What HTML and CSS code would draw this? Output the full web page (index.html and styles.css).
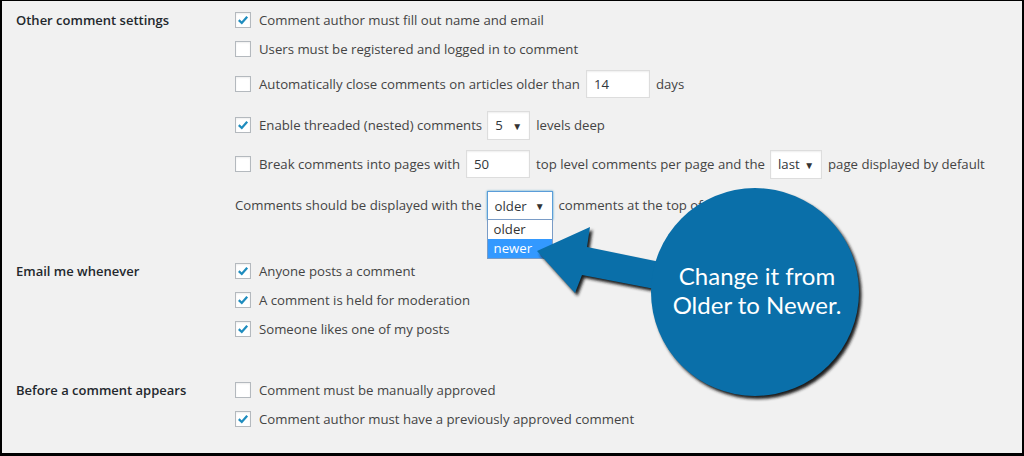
FILE: index.html
```html
<!DOCTYPE html>
<html>
<head>
<meta charset="utf-8">
<link rel="stylesheet" href="styles.css">
</head>
<body>
<div class="frame">
  <div class="screen">
    <div class="section s1">
      <div class="label">Other comment settings</div>
      <div class="fields">
        <div class="row">
          <span class="cb"><svg viewBox="0 0 16 16"><path d="M3.2 8.2 L6.6 11.4 L12.8 4.2"/></svg></span>
          <span>Comment author must fill out name and email</span>
        </div>
        <div class="row r2">
          <span class="cb"></span>
          <span>Users must be registered and logged in to comment</span>
        </div>
        <div class="row r3">
          <span class="cb"></span>
          <span>Automatically close comments on articles older than</span>
          <span class="input w64">14</span>
          <span>days</span>
        </div>
        <div class="row r4">
          <span class="cb"><svg viewBox="0 0 16 16"><path d="M3.2 8.2 L6.6 11.4 L12.8 4.2"/></svg></span>
          <span>Enable threaded (nested) comments</span>
          <span class="select w43">5<i class="caret">▼</i></span>
          <span>levels deep</span>
        </div>
        <div class="row r5">
          <span class="cb"></span>
          <span>Break comments into pages with</span>
          <span class="input w64">50</span>
          <span>top level comments per page and the</span>
          <span class="select w52">last<i class="caret">▼</i></span>
          <span>page displayed by default</span>
        </div>
        <div class="row r6">
          <span>Comments should be displayed with the</span>
          <span class="select w66 focus">older<i class="caret">▼</i>
            <span class="menu">
              <span class="opt">older</span>
              <span class="opt sel">newer</span>
            </span>
          </span>
          <span>comments at the top of each page</span>
        </div>
      </div>
    </div>

    <div class="section s2">
      <div class="label">Email me whenever</div>
      <div class="fields">
        <div class="row">
          <span class="cb"><svg viewBox="0 0 16 16"><path d="M3.2 8.2 L6.6 11.4 L12.8 4.2"/></svg></span>
          <span>Anyone posts a comment</span>
        </div>
        <div class="row r1g">
          <span class="cb"><svg viewBox="0 0 16 16"><path d="M3.2 8.2 L6.6 11.4 L12.8 4.2"/></svg></span>
          <span>A comment is held for moderation</span>
        </div>
        <div class="row r1g">
          <span class="cb"><svg viewBox="0 0 16 16"><path d="M3.2 8.2 L6.6 11.4 L12.8 4.2"/></svg></span>
          <span>Someone likes one of my posts</span>
        </div>
      </div>
    </div>

    <div class="section s3">
      <div class="label">Before a comment appears</div>
      <div class="fields">
        <div class="row">
          <span class="cb"></span>
          <span>Comment must be manually approved</span>
        </div>
        <div class="row r1g">
          <span class="cb"><svg viewBox="0 0 16 16"><path d="M3.2 8.2 L6.6 11.4 L12.8 4.2"/></svg></span>
          <span>Comment author must have a previously approved comment</span>
        </div>
      </div>
    </div>

    <div class="callout">
      <svg class="callout-art" viewBox="0 0 1024 456" width="1024" height="456">
        <defs>
          <filter id="blur" x="-10%" y="-10%" width="120%" height="120%">
            <feGaussianBlur stdDeviation="1.4"/>
          </filter>
        </defs>
        <g class="shadow" filter="url(#blur)" transform="translate(2.5 3)">
          <polygon points="537,251 590,227 587,247 665,263 660,290 582,275 575,293"/>
          <circle cx="755" cy="292" r="104"/>
        </g>
        <g class="shape">
          <polygon points="537,251 590,227 587,247 665,263 660,290 582,275 575,293"/>
          <circle cx="755" cy="292" r="104"/>
        </g>
      </svg>
      <div class="callout-text">Change it from<br>Older to Newer.</div>
    </div>
  </div>
</div>
</body>
</html>
```

FILE: styles.css
```css
html, body {
  margin: 0;
  padding: 0;
  background: #000;
}
.frame {
  width: 1024px;
  height: 456px;
  box-sizing: border-box;
  padding: 1px 2px 3px 2px;
}
.screen {
  position: relative;
  height: 452px;
  background: #f1f1f1;
  font-family: "Open Sans", "Noto Sans", sans-serif;
  font-size: 13px;
  color: #444;
  padding-top: 5px;
  box-sizing: border-box;
}
.section {
  display: grid;
  grid-template-columns: 233px 1fr;
}
.s2 { margin-top: 38px; }
.s3 { margin-top: 33px; }
.label {
  padding-left: 14px;
  height: 28px;
  line-height: 28px;
  font-weight: 600;
  color: #23282d;
}
.fields {
  display: flex;
  flex-direction: column;
  font-size: 13.2px;
}
.row {
  display: flex;
  align-items: center;
  height: 28px;
  white-space: nowrap;
}
.r2, .r1g { margin-top: 1px; }
.r3 { margin-top: 7px; }
.r4 { margin-top: 13px; }
.r5 { margin-top: 11px; }
.r6 { margin-top: 13px; }
.cb {
  width: 16px;
  height: 16px;
  box-sizing: border-box;
  border: 1px solid #b4b9be;
  background: #fff;
  box-shadow: inset 0 1px 2px rgba(0,0,0,0.07);
  margin-right: 8px;
  flex: none;
  display: flex;
}
.cb svg {
  width: 14px;
  height: 14px;
}
.cb path {
  fill: none;
  stroke: #1e8cbe;
  stroke-width: 2.6;
  stroke-linecap: butt;
  stroke-linejoin: miter;
}
.input, .select {
  position: relative;
  height: 28px;
  box-sizing: border-box;
  border: 1px solid #ddd;
  background: #fff;
  box-shadow: inset 0 1px 2px rgba(0,0,0,0.07);
  display: flex;
  align-items: center;
  padding-left: 7px;
  color: #32373c;
  flex: none;
}
.input { margin: 0 6px 0 6px; }
.select { margin: 0 6px 0 5px; height: 29px; }
.w64 { width: 64px; }
.w43 { width: 43px; }
.w52 { width: 52px; }
.w66 { width: 66px; }
.caret {
  position: absolute;
  right: 7px;
  top: 7px;
  font-style: normal;
  font-size: 10px;
  color: #333;
}
.focus {
  border-color: #5b9dd9;
  box-shadow: 0 0 2px rgba(30,140,190,0.8);
  padding-top: 2px;
}
.menu {
  position: absolute;
  left: -1px;
  top: 27px;
  width: 66px;
  box-sizing: border-box;
  border: 1px solid #7a9cc6;
  background: #fff;
  display: flex;
  flex-direction: column;
}
.opt {
  height: 19px;
  line-height: 19px;
  padding-left: 6px;
  color: #333;
}
.opt.sel {
  background: #3399ff;
  color: #fff;
}
.callout {
  position: absolute;
  left: -2px;
  top: -1px;
  width: 1024px;
  height: 456px;
  pointer-events: none;
}
.callout-art {
  position: absolute;
  left: 0;
  top: 0;
}
.shadow polygon, .shadow circle { fill: #1d1d1d; }
.shape polygon, .shape circle { fill: #0a6fa9; }
.callout-text {
  position: absolute;
  left: 657px;
  top: 261px;
  width: 200px;
  text-align: center;
  font-family: Lato, "Open Sans", sans-serif;
  font-size: 24px;
  line-height: 29px;
  color: #fff;
}
```
